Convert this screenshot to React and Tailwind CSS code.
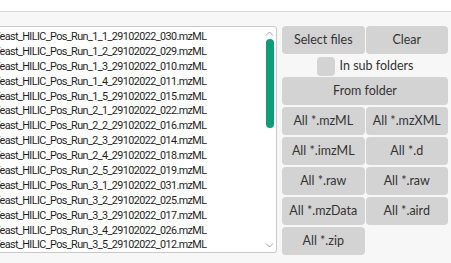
import React from "react";

const files = [
  "Yeast_HILIC_Pos_Run_1_1_29102022_030.mzML",
  "Yeast_HILIC_Pos_Run_1_2_29102022_029.mzML",
  "Yeast_HILIC_Pos_Run_1_3_29102022_010.mzML",
  "Yeast_HILIC_Pos_Run_1_4_29102022_011.mzML",
  "Yeast_HILIC_Pos_Run_1_5_29102022_015.mzML",
  "Yeast_HILIC_Pos_Run_2_1_29102022_022.mzML",
  "Yeast_HILIC_Pos_Run_2_2_29102022_016.mzML",
  "Yeast_HILIC_Pos_Run_2_3_29102022_014.mzML",
  "Yeast_HILIC_Pos_Run_2_4_29102022_018.mzML",
  "Yeast_HILIC_Pos_Run_2_5_29102022_019.mzML",
  "Yeast_HILIC_Pos_Run_3_1_29102022_031.mzML",
  "Yeast_HILIC_Pos_Run_3_2_29102022_025.mzML",
  "Yeast_HILIC_Pos_Run_3_3_29102022_017.mzML",
  "Yeast_HILIC_Pos_Run_3_4_29102022_026.mzML",
  "Yeast_HILIC_Pos_Run_3_5_29102022_012.mzML",
];

function Btn({ children, className = "" }) {
  return (
    <div
      className={
        "h-[28px] flex items-center justify-center rounded-[4px] bg-[#d3d3d3] text-[#333333] text-[12.5px] " +
        className
      }
    >
      {children}
    </div>
  );
}

export default function App() {
  return (
    <div
      className="w-[451px] h-[263px] overflow-hidden bg-[#f7f7f7] flex flex-col"
      style={{ fontFamily: 'Lato, "Noto Sans", sans-serif' }}
    >
      <div className="h-[12px] bg-white border-b border-[#d8d8d8] shrink-0" />
      <div className="flex pt-[14px]">
        <div className="ml-[-10px] w-[287px] h-[227px] bg-white border border-[#c9c9c9] rounded-[3px] flex shrink-0">
          <div
            className="flex-1 pl-[3px] pt-[3px] overflow-hidden"
            style={{ fontFamily: 'Roboto, "Noto Sans", sans-serif' }}
          >
            {files.map((f) => (
              <div
                key={f}
                className="h-[14.9px] leading-[14.9px] text-[10.8px] text-[#1e1e1e] whitespace-nowrap tracking-[-0.58px]"
              >
                {f}
              </div>
            ))}
          </div>
          <div className="w-[13px] flex flex-col items-center pt-[1px] pb-[1px]">
            <svg width="9" height="8" viewBox="0 0 9 8" className="mt-[2px]">
              <path d="M1 5.5 L4.5 2 L8 5.5" fill="none" stroke="#a0a0a0" strokeWidth="1" />
            </svg>
            <div className="w-[8px] h-[89px] mt-[1px] rounded-full bg-[#0f9d78]" />
            <div className="flex-1" />
            <svg width="9" height="8" viewBox="0 0 9 8" className="mb-[2px]">
              <path d="M1 2.5 L4.5 6 L8 2.5" fill="none" stroke="#a0a0a0" strokeWidth="1" />
            </svg>
          </div>
        </div>
        <div className="ml-[5px] w-[166px] flex flex-col">
          <div className="grid grid-cols-2 gap-x-[1px]">
            <Btn>Select files</Btn>
            <Btn>Clear</Btn>
          </div>
          <div className="h-[20px] mt-[2px] mb-[1px] flex items-center justify-center gap-[5px]">
            <div className="w-[18px] h-[19px] rounded-[4px] bg-[#d3d3d3]" />
            <span className="text-[12.5px] text-[#333333]">In sub folders</span>
          </div>
          <Btn>From folder</Btn>
          <div className="grid grid-cols-2 gap-x-[1px] gap-y-[2px] mt-[2px]">
            <Btn>All *.mzML</Btn>
            <Btn>All *.mzXML</Btn>
            <Btn>All *.imzML</Btn>
            <Btn>All *.d</Btn>
            <Btn>All *.raw</Btn>
            <Btn>All *.raw</Btn>
            <Btn>All *.mzData</Btn>
            <Btn>All *.aird</Btn>
            <Btn>All *.zip</Btn>
          </div>
        </div>
      </div>
    </div>
  );
}
